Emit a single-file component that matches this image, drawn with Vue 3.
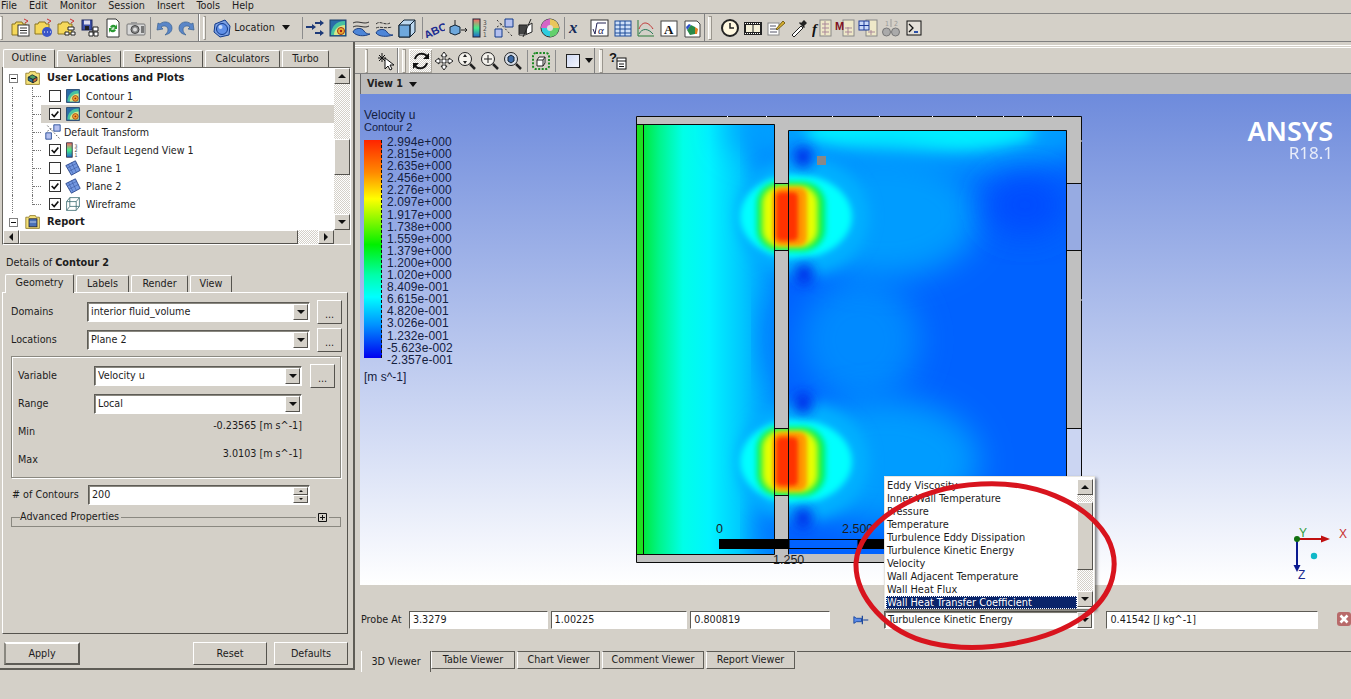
<script setup>
const icons = {
  folderDoc: '<path d="M1 6h3l1-2h6l1 2h3v11H1z" fill="#f5d85a" stroke="#8a7420"/><rect x="7" y="7" width="11" height="11" fill="#fff" stroke="#333"/><path d="M9 10h7M9 12.5h7M9 15h7" stroke="#333"/><path d="M13 1l4 2-3 2" fill="none" stroke="#c33"/>',
  folderBlue: '<path d="M1 6h3l1-2h6l1 2h3v10H1z" fill="#f5d85a" stroke="#8a7420"/><circle cx="13" cy="14" r="5" fill="#3a55c8"/><path d="M10 14h1M13 14h1M16 14h1" stroke="#fff"/><path d="M13 1l4 2-3 2" fill="none" stroke="#c33"/>',
  folderTree: '<path d="M1 6h3l1-2h6l1 2h3v10H1z" fill="#f5d85a" stroke="#8a7420"/><path d="M11 9h6v3h-6zM8 14h4v3H8zM14 14h4v3h-4z" fill="#fff" stroke="#222"/><path d="M13 1l4 2-3 2" fill="none" stroke="#c33"/>',
  saveTree: '<rect x="2" y="2" width="10" height="10" fill="#3c50a8" stroke="#1c2860"/><rect x="4" y="2.5" width="6" height="4" fill="#dde"/><rect x="5" y="8" width="4" height="4" fill="#222"/><path d="M9 14h4M13 10v6" stroke="#222"/><path d="M13 9h5v4h-5zM9 14h4v4H9zM14 14h4v4h-4z" fill="#fff" stroke="#222"/>',
  refresh: '<path d="M4 1h9l3 3v15H4z" fill="#fff" stroke="#333"/><path d="M7 9a3.5 3.5 0 0 1 6-1l1-2v5h-4l2-1a2 2 0 0 0-3 0z" fill="#2a9a32"/><path d="M13 12a3.5 3.5 0 0 1-6 1l-1 2v-5h4l-2 1a2 2 0 0 0 3 0z" fill="#2a9a32"/>',
  camera: '<rect x="1" y="6" width="18" height="11" rx="1" fill="#d8d8d8" stroke="#777"/><rect x="5" y="4" width="6" height="2" fill="#999"/><circle cx="9" cy="11.5" r="4" fill="#888" stroke="#444"/><circle cx="9" cy="11.5" r="2" fill="#ddd"/><rect x="15" y="8" width="3" height="7" fill="#777"/>',
  undo: '<path d="M4 5l-1 7 6-1-2-2c3-2 7-1 7 3 0 2-2 4-3 5 4-1 7-3 7-7 0-6-8-8-12-4z" fill="#5a86c8" stroke="#38608f" stroke-width=".7"/>',
  redo: '<path d="M16 5l1 7-6-1 2-2c-3-2-7-1-7 3 0 2 2 4 3 5-4-1-7-3-7-7 0-6 8-8 12-4z" fill="#5a86c8" stroke="#38608f" stroke-width=".7"/>',
  location: '<path d="M3 6l10-4 5 6-1 9-9 2-6-5z" fill="#7ba0e4" stroke="#123a8a"/><circle cx="10" cy="11" r="5.5" fill="#5f8fe8" stroke="#123a8a"/><circle cx="8.5" cy="9" r="2" fill="#c9dcfa"/>',
  vector: '<g fill="#1e3a78"><path d="M1 9h6V7l4 3-4 3v-2H1z" transform="translate(0 -1)"/><path d="M10 4h5V2l4 3-4 3V6h-5z"/><path d="M10 14h5v-2l4 3-4 3v-2h-5z"/></g>',
  contour: '<rect x="2" y="2" width="16" height="16" fill="#2b6ca8" stroke="#1b3e68"/><path d="M3 17c0-8 5-14 14-14v14z" fill="#47c3a0"/><path d="M6 17c0-6 5-10 11-10v10z" fill="#d8e888"/><circle cx="13" cy="13" r="3.5" fill="#f0b030" stroke="#a03018"/><circle cx="13" cy="13" r="1.2" fill="#a02018"/>',
  stream: '<path d="M2 5c5-3 11 2 16-1M2 9c5-3 11 2 16-1" fill="none" stroke="#333"/><path d="M2 14c1-4 9-5 11-1 2 3 5 3 6 3-6 3-14 2-17-2z" fill="#4e86d8" stroke="#1d3f80"/>',
  stream2: '<path d="M2 6c4-4 9 2 14-1M2 10c4-2 9 1 16-1" fill="none" stroke="#333" stroke-dasharray="3 1"/><path d="M2 15c1-4 9-5 11-1 2 3 5 3 6 3-6 2-14 2-17-2z" fill="#4e86d8" stroke="#1d3f80"/>',
  cube: '<path d="M2 7l5-5h11v12l-5 5H2z" fill="#bcd8f0" stroke="#123"/><path d="M2 7h11v12H2z" fill="#6ea8dc" stroke="#123"/><path d="M13 7l5-5M13 7v12" stroke="#123"/>',
  abc: '<text x="-2" y="17" font-size="11" font-weight="700" font-family="Liberation Sans" fill="#1c2c90" transform="rotate(-25 9 12)">ABC</text>',
  instance: '<path d="M2 9l5-2 5 2v6l-5 2-5-2z" fill="#6ea8dc" stroke="#123"/><path d="M7 2v5M13 12h6M17 10l2 2-2 2" stroke="#222" fill="none"/>',
  legend: '<defs><linearGradient id="lg" x2="0" y2="1"><stop offset="0" stop-color="#f66"/><stop offset=".5" stop-color="#4e8"/><stop offset="1" stop-color="#26c"/></linearGradient></defs><rect x="2" y="1" width="7" height="18" fill="url(#lg)" stroke="#223"/><text x="12" y="7" font-size="6.5" fill="#444">3</text><text x="12" y="13" font-size="6.5" fill="#444">2</text><text x="12" y="19" font-size="6.5" fill="#444">1</text>',
  transform: '<path d="M1 11h7v8H1z" fill="#b4c0ee" stroke="#123a8a"/><path d="M11 1h8v8h-8z" fill="#b4c0ee" stroke="#123a8a"/><path d="M3 2l15 16M8 6l-5 3" stroke="#333" stroke-dasharray="2 2"/>',
  clip: '<path d="M2 7h10l3-2v9l-7 3H2z" fill="#fff" stroke="#222"/><path d="M2 7h8v9H2z" fill="#222" opacity=".85"/><path d="M14 1L6 19" stroke="#222"/>',
  wheel: '<circle cx="10" cy="10" r="9" fill="#2ecde0" stroke="#333"/><path d="M10 10V1a9 9 0 0 1 9 9z" fill="#e9c65c"/><path d="M10 10h9a9 9 0 0 1-9 9z" fill="#63d06c"/><path d="M10 10V1a9 9 0 0 0-9 9z" fill="#d663c6"/><circle cx="10" cy="10" r="3" fill="#ddd"/>',
  xfn: '<text x="2" y="15" font-size="17" font-style="italic" font-weight="700" font-family="Liberation Serif" fill="#152a58">x</text>',
  sqrt: '<rect x="1" y="2" width="17" height="16" fill="#fff" stroke="#333"/><path d="M3 11l2 5 2-11h9" fill="none" stroke="#225"/><text x="8" y="16" font-size="11" font-style="italic" font-family="Liberation Serif" fill="#225">α</text>',
  table: '<rect x="2" y="3" width="16" height="15" fill="#cfe0f8" stroke="#1d4a98"/><path d="M2 7h16M2 11h16M2 15h16M7 3v15M12 3v15" stroke="#1d4a98"/>',
  chart: '<path d="M2 2v16h16" fill="none" stroke="#2a7a3a"/><path d="M3 11c3-8 9-8 14 0" fill="none" stroke="#c03030"/><path d="M3 16c3-6 9-6 14 0" fill="none" stroke="#2a7a5a"/>',
  textA: '<rect x="2" y="3" width="16" height="15" fill="#fff" stroke="#444"/><text x="5" y="15.5" font-size="13" font-family="Liberation Serif" font-weight="700" fill="#111">A</text>',
  multi: '<path d="M3 3h12l3 3v13H3z" fill="#fff" stroke="#444"/><path d="M5 12l4-5 4 2v7l-5 1z" fill="#2a8a48"/><path d="M5 12l4-5-2-1-3 3z" fill="#2c50c8"/><path d="M13 9l3 2-1 5h-2z" fill="#e08020"/>',
  clock: '<circle cx="10" cy="10" r="8" fill="#fff8e0" stroke="#222" stroke-width="2"/><path d="M10 5v5h4" fill="none" stroke="#222" stroke-width="1.5"/>',
  film: '<rect x="1" y="4" width="18" height="13" fill="#222"/><rect x="3" y="7" width="6.5" height="7" fill="#f4f0d8"/><rect x="10.5" y="7" width="6.5" height="7" fill="#f4f0d8"/><path d="M2 5.5h16M2 15.5h16" stroke="#fff" stroke-dasharray="1 1"/>',
  note: '<rect x="2" y="5" width="11" height="12" fill="#fff" stroke="#888"/><path d="M4 8h6M4 11h7M4 14h7" stroke="#556"/><path d="M10 11l7-8 2 2-8 7z" fill="#d8b030" stroke="#776018"/>',
  dropper: '<path d="M3 17l9-9 2 2-9 9z" fill="#fff" stroke="#222"/><path d="M12 5l3-3 3 3-3 3 1 1-1 1-5-5 1-1z" fill="#222"/>',
  ftable: '<rect x="8" y="2" width="11" height="16" fill="#eee8c8" stroke="#888"/><path d="M10 6h7M10 10h7M10 14h7M13 3v14" stroke="#a89"/><text x="0" y="16" font-size="15" font-style="italic" font-weight="700" font-family="Liberation Serif" fill="#111">f</text>',
  mtable: '<rect x="8" y="2" width="11" height="16" fill="#eee8c8" stroke="#888"/><path d="M10 10h7M10 14h7M13 9v8" stroke="#a89"/><text x="0" y="12" font-size="11" font-weight="700" font-family="Liberation Sans" fill="#801020">M</text>',
  gtable: '<rect x="8" y="2" width="11" height="16" fill="#eee8c8" stroke="#888"/><path d="M10 14h7M13 12v5" stroke="#a89"/><rect x="1" y="3" width="10" height="9" fill="#c8d8f8" stroke="#1c3a98"/><path d="M1 7.5h10M6 3v9" stroke="#1c3a98"/>',
  compare: '<text x="4" y="8" font-size="7" fill="#999">1</text><text x="13" y="8" font-size="7" fill="#999">2</text><path d="M10 1v8" stroke="#999"/><circle cx="5.5" cy="14" r="4" fill="#aaa" stroke="#777"/><circle cx="14.5" cy="14" r="4" fill="#aaa" stroke="#777"/>',
  terminal: '<rect x="3" y="3" width="14" height="14" fill="#e4e0d8" stroke="#111"/><path d="M5 6l4 4-4 4" fill="none" stroke="#111" stroke-width="1.3"/><path d="M10 14h4" stroke="#2c50a8" stroke-width="2"/>',
  pick: '<path d="M3 4l6 6M9 4l-6 6M6 2v9M2 7h8" stroke="#111"/><path d="M9 7v11l3-3 2 4 2-1-2-4h4z" fill="#fff" stroke="#111"/>',
  rotate: '<path d="M4 8a7 7 0 0 1 12-3" fill="none" stroke="#111" stroke-width="2"/><path d="M18 2v6h-6z" fill="#111"/><path d="M16 12a7 7 0 0 1-12 3" fill="none" stroke="#111" stroke-width="2"/><path d="M2 18v-6h6z" fill="#111"/>',
  pan: '<path d="M10 1l3 4h-2v4h4V7l4 3-4 3v-2h-4v4h2l-3 4-3-4h2v-4H5v2l-4-3 4-3v2h4V5H7z" fill="#fff" stroke="#111" stroke-width=".9"/>',
  zoomIo: '<circle cx="8" cy="8" r="6.5" fill="#f4f2ec" stroke="#222"/><path d="M8 3l2 3H6zM8 13l2-3H6z" fill="#222"/><path d="M13 13l5 5" stroke="#222" stroke-width="2.5"/>',
  zoomPlus: '<circle cx="8" cy="8" r="6.5" fill="#f4f2ec" stroke="#222"/><path d="M8 4v8M4 8h8" stroke="#222"/><path d="M13 13l5 5" stroke="#222" stroke-width="2.5"/>',
  zoomFit: '<circle cx="8" cy="8" r="6.5" fill="#d8dee8" stroke="#222"/><path d="M5 6l3-2 3 2v4l-3 2-3-2z" fill="#3c6aa8" stroke="#123"/><path d="M13 13l5 5" stroke="#222" stroke-width="2.5"/>',
  fit: '<rect x="2" y="2" width="16" height="16" rx="3" fill="none" stroke="#1c8a24" stroke-width="2" stroke-dasharray="2 1.5"/><path d="M6 9h6v6H6zM6 9l2-3h6v6l-2 3M12 9l2-3" fill="#fff" stroke="#222"/>',
  whatsThis: '<text x="1" y="11" font-size="13" font-weight="700" font-family="Liberation Sans" fill="#111">?</text><rect x="9" y="7" width="9" height="11" fill="#fff" stroke="#111"/><path d="M9 10h9M11 13h5M11 15.5h5" stroke="#111"/>',
  folderCube: '<path d="M1 4h4l1-2h7l1 2h4v14H1z" fill="#f5e27a" stroke="#8a7420"/><path d="M4 9l5-3 6 3-5 3z" fill="#50a060" stroke="#123"/><path d="M4 9l6 3v4l-6-3z" fill="#2c7a9a" stroke="#123"/><path d="M10 12l5-3v4l-5 3z" fill="#d06a30" stroke="#123"/>',
  folderDocs: '<path d="M1 4h4l1-2h7l1 2h4v14H1z" fill="#f5e27a" stroke="#8a7420"/><rect x="5" y="6" width="10" height="10" fill="#4c72b8" stroke="#223"/><path d="M6 10h8" stroke="#d8e4f8"/>',
  plane: '<path d="M1 7l12-6 6 12-11 6z" fill="#7498e0" stroke="#1d3a80"/><path d="M4 5l6 12M8 3l6 12M3 10l12-6M5 14l12-6" stroke="#2c4a94" stroke-width=".6"/>',
  wire: '<path d="M2 7h12v11H2zM6 2h12v11H6zM2 7l4-5M14 7l4-5M2 18l4-5M14 18l4-5" fill="none" stroke="#3a6a70"/>',
  pin: '<path d="M1 4v8l3-2h6V6H4z" fill="#5a8ae8" stroke="#12409a"/><path d="M11 3v10M12 8h6" stroke="#12409a" stroke-width="1.4"/>'
}

const mainBar = [
  ['#', 'folderDoc', 'folderBlue', 'folderTree', 'saveTree', 'refresh', 'camera', '|', 'undo', 'redo'],
  ['#', '@', '|', 'vector', 'contour', 'stream', 'stream2', 'cube', '|', 'abc', 'instance', 'legend', 'transform', 'clip', 'wheel', '|', 'xfn', 'sqrt', 'table', 'chart', 'textA', 'multi'],
  ['#', 'clock', 'film', 'note', 'dropper', 'ftable', 'mtable', 'gtable', 'compare', 'terminal']
]

const viewBar = [
  ['#', 'pick'],
  ['#', '!', 'pan', 'zoomIo', 'zoomPlus', 'zoomFit', '|', 'fit', '|', '$'],
  ['#', 'whatsThis']
]

const outlineTabs = ['Outline', 'Variables', 'Expressions', 'Calculators', 'Turbo']
const detailTabs = ['Geometry', 'Labels', 'Render', 'View']
const viewerTabs = ['3D Viewer', 'Table Viewer', 'Chart Viewer', 'Comment Viewer', 'Report Viewer']
const menus = ['File', 'Edit', 'Monitor', 'Session', 'Insert', 'Tools', 'Help']

const plots = [
  { label: 'Contour 1', icon: 'contour', box: true, on: false },
  { label: 'Contour 2', icon: 'contour', box: true, on: true, selected: true },
  { label: 'Default Transform', icon: 'transform', box: false },
  { label: 'Default Legend View 1', icon: 'legend', box: true, on: true },
  { label: 'Plane 1', icon: 'plane', box: true, on: false },
  { label: 'Plane 2', icon: 'plane', box: true, on: true },
  { label: 'Wireframe', icon: 'wire', box: true, on: true, last: true }
]

const legendValues = [
  '2.994e+000', '2.815e+000', '2.635e+000', '2.456e+000', '2.276e+000', '2.097e+000', '1.917e+000',
  '1.738e+000', '1.559e+000', '1.379e+000', '1.200e+000', '1.020e+000', '8.409e-001', '6.615e-001',
  '4.820e-001', '3.026e-001', '1.232e-001', '-5.623e-002', '-2.357e-001'
]

const probeVars = [
  'Eddy Viscosity', 'Inner Wall Temperature', 'Pressure', 'Temperature', 'Turbulence Eddy Dissipation',
  'Turbulence Kinetic Energy', 'Velocity', 'Wall Adjacent Temperature', 'Wall Heat Flux',
  'Wall Heat Transfer Coefficient'
]
</script>

<template>
  <div class="app">
    <div class="menubar">
      <span v-for="m in menus" :key="m" class="menu">{{ m }}</span>
    </div>

    <div class="toolbar">
      <div v-for="(group, i) in mainBar" :key="i" class="tgroup" :class="'g' + i">
        <template v-for="(item, j) in group" :key="j">
          <span v-if="item === '#'" class="grip"></span>
          <span v-else-if="item === '|'" class="sep"></span>
          <span v-else-if="item === '@'" class="loc">
            <svg class="ic" viewBox="0 0 20 20" v-html="icons.location"></svg>
            <span>Location</span>
            <span class="caret"></span>
          </span>
          <span v-else class="tool"><svg class="ic" viewBox="0 0 20 20" v-html="icons[item]"></svg></span>
        </template>
      </div>
    </div>

    <div class="main">
      <aside class="left">
        <div class="tabs outline-tabs">
          <span v-for="(t, i) in outlineTabs" :key="t" class="tab" :class="['ot' + i, { active: i === 0 }]">{{ t }}</span>
        </div>

        <div class="treebox">
          <div class="tree">
            <div class="node root">
              <span class="expander"></span>
              <svg class="ic16" viewBox="0 0 20 20" v-html="icons.folderCube"></svg>
              <b>User Locations and Plots</b>
            </div>
            <div v-for="p in plots" :key="p.label" class="node">
              <span class="stem-a"></span>
              <span class="stem-b" :class="{ last: p.last }"></span>
              <div class="node-main" :class="{ selected: p.selected, nobox: !p.box }">
                <span v-if="p.box" class="check" :class="{ on: p.on }">
                  <svg v-if="p.on" viewBox="0 0 12 12"><path d="M2 6l3 3 5-6" fill="none" stroke="#111" stroke-width="2"/></svg>
                </span>
                <svg class="ic16" viewBox="0 0 20 20" v-html="icons[p.icon]"></svg>
                <span>{{ p.label }}</span>
              </div>
            </div>
            <div class="node root">
              <span class="expander"></span>
              <svg class="ic16" viewBox="0 0 20 20" v-html="icons.folderDocs"></svg>
              <b>Report</b>
            </div>
          </div>
          <div class="vscroll">
            <span class="sb-btn"><i class="tri up"></i></span>
            <span class="track t1"></span>
            <span class="thumb"></span>
            <span class="track t2"></span>
            <span class="sb-btn"><i class="tri down"></i></span>
          </div>
          <div class="hscroll">
            <span class="sb-btn"><i class="tri lft"></i></span>
            <span class="thumb h"></span>
            <span class="track t2"></span>
            <span class="sb-btn"><i class="tri rgt"></i></span>
          </div>
          <div class="corner"></div>
        </div>

        <div class="details-title">Details of <b>Contour 2</b></div>
        <div class="tabs detail-tabs">
          <span v-for="(t, i) in detailTabs" :key="t" class="tab" :class="['dt' + i, { active: i === 0 }]">{{ t }}</span>
        </div>

        <div class="form">
          <div class="frow">
            <label>Domains</label>
            <div class="combo"><span>interior fluid_volume</span><span class="drop"><i class="tri down"></i></span></div>
            <button class="dots">...</button>
          </div>
          <div class="frow">
            <label>Locations</label>
            <div class="combo"><span>Plane 2</span><span class="drop"><i class="tri down"></i></span></div>
            <button class="dots">...</button>
          </div>

          <div class="group">
            <div class="grow">
              <label>Variable</label>
              <div class="combo"><span>Velocity u</span><span class="drop"><i class="tri down"></i></span></div>
              <button class="dots">...</button>
            </div>
            <div class="grow">
              <label>Range</label>
              <div class="combo"><span>Local</span><span class="drop"><i class="tri down"></i></span></div>
            </div>
            <div class="grow">
              <label>Min</label>
              <span class="val">-0.23565 [m s^-1]</span>
            </div>
            <div class="grow">
              <label>Max</label>
              <span class="val">3.0103 [m s^-1]</span>
            </div>
          </div>

          <div class="frow contours">
            <label># of Contours</label>
            <div class="combo"><span>200</span><span class="spin"><i class="sb-btn"><i class="tri up small"></i></i><i class="sb-btn"><i class="tri down small"></i></i></span></div>
          </div>

          <div class="adv">
            <span class="adv-label">Advanced Properties</span>
            <span class="adv-plus">
              <svg viewBox="0 0 9 9"><path d="M.5.5h8v8h-8zM4.5 2v5M2 4.5h5" fill="none" stroke="#111"/></svg>
            </span>
          </div>
        </div>

        <div class="actions">
          <button class="btn default">Apply</button>
          <button class="btn reset">Reset</button>
          <button class="btn">Defaults</button>
        </div>
      </aside>

      <section class="viewer">
        <div class="viewbar">
          <div v-for="(group, i) in viewBar" :key="i" class="tgroup" :class="'v' + i">
            <template v-for="(item, j) in group" :key="j">
              <span v-if="item === '#'" class="grip"></span>
              <span v-else-if="item === '|'" class="sep"></span>
              <span v-else-if="item === '!'" class="tool pressed"><svg class="ic" viewBox="0 0 20 20" v-html="icons.rotate"></svg></span>
              <span v-else-if="item === '$'" class="swatch-btn"><span class="swatch"></span><span class="caret"></span></span>
              <span v-else class="tool"><svg class="ic" viewBox="0 0 20 20" v-html="icons[item]"></svg></span>
            </template>
          </div>
        </div>

        <div class="viewtitle"><b>View 1</b><span class="caret"></span></div>

        <div class="canvas">
          <svg class="plot" viewBox="360 94 991 491">
            <defs>
              <linearGradient id="leftBase" gradientUnits="userSpaceOnUse" x1="644" y1="0" x2="774" y2="0">
                <stop offset="0" stop-color="#00ea40" />
                <stop offset=".12" stop-color="#00f58c" />
                <stop offset=".3" stop-color="#00ffe8" />
                <stop offset=".5" stop-color="#00f4ff" />
                <stop offset=".75" stop-color="#00c8ff" />
                <stop offset="1" stop-color="#0090ff" />
              </linearGradient>
              <filter id="b2" x="-30%" y="-30%" width="160%" height="160%"><feGaussianBlur stdDeviation="2" /></filter>
              <filter id="b3" x="-30%" y="-30%" width="160%" height="160%"><feGaussianBlur stdDeviation="3" /></filter>
              <filter id="b6" x="-80%" y="-80%" width="260%" height="260%"><feGaussianBlur stdDeviation="6" /></filter>
              <filter id="b7" x="-40%" y="-60%" width="180%" height="220%"><feGaussianBlur stdDeviation="7" /></filter>
              <filter id="b16" x="-50%" y="-50%" width="200%" height="200%"><feGaussianBlur stdDeviation="16" /></filter>
              <clipPath id="fluid">
                <path d="M644 124.5h131v430H644zM775 183h14v67h-14zM775 428h14v67h-14zM789 130h278v424H789z" />
              </clipPath>
              <g id="jet">
                <ellipse cx="803" cy="216.5" rx="66" ry="60" fill="#00b0ff" filter="url(#b7)" />
                <ellipse cx="796" cy="216.5" rx="56" ry="42" fill="#00ffff" filter="url(#b3)" />
                <rect x="757" y="182" width="68" height="69" rx="22" fill="#00f050" filter="url(#b3)" />
                <rect x="762" y="186" width="56" height="61" rx="17" fill="#e8ff00" filter="url(#b3)" />
                <rect x="773" y="187" width="34" height="59" rx="8" fill="#ff9a00" filter="url(#b2)" />
                <rect x="776" y="192" width="22" height="49" rx="5" fill="#ff3000" filter="url(#b2)" />
              </g>
            </defs>

            <rect x="636" y="116" width="445" height="446" fill="#c0c0c0" />
            <path d="M1067 183h14.5v67H1067z" fill="#97abe2" />
            <path d="M1067 428h14.5v130H1067z" fill="#cbd5f2" />

            <g clip-path="url(#fluid)">
              <rect x="644" y="124" width="131" height="431" fill="url(#leftBase)" />
              <ellipse cx="772" cy="145" rx="16" ry="36" fill="#0070ff" filter="url(#b16)" />
              <ellipse cx="775" cy="338" rx="12" ry="44" fill="#0078ff" filter="url(#b16)" />
              <ellipse cx="772" cy="532" rx="16" ry="34" fill="#0070ff" filter="url(#b16)" />
              <rect x="789" y="130" width="278" height="424" fill="#0062ff" />
              <ellipse cx="915" cy="130" rx="190" ry="44" fill="#00a0ff" filter="url(#b16)" />
              <ellipse cx="920" cy="132" rx="115" ry="20" fill="#00eeff" filter="url(#b7)" />
              <ellipse cx="860" cy="340" rx="60" ry="60" fill="#008aff" filter="url(#b16)" />
              <ellipse cx="885" cy="216" rx="95" ry="62" fill="#009cff" filter="url(#b16)" />
              <ellipse cx="885" cy="461" rx="95" ry="62" fill="#009cff" filter="url(#b16)" />
              <ellipse cx="1025" cy="205" rx="40" ry="30" fill="#004cff" filter="url(#b16)" />
              <use href="#jet" />
              <use href="#jet" y="245" />
              <ellipse cx="803" cy="157" rx="10" ry="11" fill="#0024e8" opacity=".85" filter="url(#b6)" />
              <ellipse cx="804" cy="274" rx="10" ry="11" fill="#0024e8" opacity=".85" filter="url(#b6)" />
              <ellipse cx="803" cy="403" rx="10" ry="11" fill="#0024e8" opacity=".85" filter="url(#b6)" />
              <ellipse cx="803" cy="518" rx="10" ry="11" fill="#0024e8" opacity=".85" filter="url(#b6)" />
            </g>

            <rect x="636.5" y="124.5" width="7" height="430" fill="#1fe020" />
            <rect x="817" y="156" width="9" height="9" fill="#888" />

            <g fill="none" stroke="#0a0a0a" stroke-width="1">
              <path d="M636.5 116.5h445v446h-445z" />
              <path d="M636.5 124.5h138V554.5h-138M643.5 124.5V554.5" />
              <path d="M788.5 554.5V130.5h278v424" />
              <path d="M774.5 183.5h14M774.5 250.5h14M774.5 428.5h14M774.5 495.5h14" />
              <path d="M1066.5 183.5h15M1066.5 250.5h15M1066.5 428.5h15" />
            </g>
            <path d="M727 116.5h1M766 116.5h1M832 116.5h1M879 116.5h1M932 116.5h1M976 116.5h1M1003 116.5h1M1022 116.5h1M1052 116.5h1M1081 141h1M1081 300h1" stroke="#fff" />

            <rect x="719" y="539" width="70" height="10" fill="#000" />
            <rect x="789" y="539.5" width="69" height="9" fill="none" stroke="#000" />
            <rect x="858" y="539" width="30" height="10" fill="#000" />
            <g font-family="Liberation Sans" font-size="12.5" fill="#1c1c1c">
              <text x="716" y="533">0</text>
              <text x="842" y="533">2.500</text>
              <text x="773" y="564">1.250</text>
            </g>

            <path d="M1297 539h26" stroke="#c01010" stroke-width="2" />
            <path d="M1321 535.5l9 3.5-9 3.5z" fill="#c01010" />
            <path d="M1297 539v27" stroke="#0a1a90" stroke-width="2" />
            <path d="M1293.5 565l3.5 7 3.5-7z" fill="#0a1a90" />
            <circle cx="1297" cy="539" r="3" fill="#107010" />
            <circle cx="1314" cy="556" r="3.2" fill="#10b8c8" />
            <g font-family="Liberation Sans" font-size="12">
              <text x="1299" y="537" fill="#30a040">Y</text>
              <text x="1339" y="538" fill="#c83030">X</text>
              <text x="1298" y="579" fill="#1a2a90">Z</text>
            </g>
          </svg>

          <div class="legend">
            <div class="leg-title">Velocity u</div>
            <div class="leg-sub">Contour 2</div>
            <div class="leg-body">
              <div class="leg-bar"></div>
              <div class="leg-values">
                <span v-for="v in legendValues" :key="v">{{ v }}</span>
              </div>
            </div>
            <div class="leg-unit">[m s^-1]</div>
          </div>

          <div class="brand">
            <div class="brand-name">ANSYS</div>
            <div class="brand-rel">R18.1</div>
          </div>
        </div>

        <div class="probe">
          <label>Probe At</label>
          <div class="field f1">3.3279</div>
          <div class="field f2">1.00225</div>
          <div class="field f3">0.800819</div>
          <svg class="pin" viewBox="0 0 20 16" v-html="icons.pin"></svg>
          <div class="probe-combo">
            <div class="combo wide"><span>Turbulence Kinetic Energy</span><span class="drop"><i class="tri down"></i></span></div>
            <div class="popup">
              <ul>
                <li v-for="(v, i) in probeVars" :key="v" :class="{ sel: i === probeVars.length - 1 }">{{ v }}</li>
              </ul>
              <div class="vscroll pop">
                <span class="sb-btn"><i class="tri up"></i></span>
                <span class="track p1"></span>
                <span class="thumb p"></span>
                <span class="track t2"></span>
                <span class="sb-btn"><i class="tri down"></i></span>
              </div>
            </div>
          </div>
          <div class="field result">0.41542 [J kg^-1]</div>
          <span class="close">
            <svg viewBox="0 0 14 14"><rect width="14" height="14" rx="3" fill="#b86a6a"/><path d="M3.5 3.5l7 7M10.5 3.5l-7 7" stroke="#fff" stroke-width="2.6"/></svg>
          </span>
        </div>

        <div class="vtabs">
          <span v-for="(t, i) in viewerTabs" :key="t" class="vtab" :class="['vt' + i, { active: i === 0 }]">{{ t }}</span>
          <span class="vfill"></span>
        </div>
      </section>
    </div>

    <svg class="ring" viewBox="0 0 270 176">
      <path d="M128 5C180 2 232 22 254 58c14 26 8 58-24 80-34 24-100 38-152 26C34 154 2 118 3 84 5 46 60 8 128 5z" fill="none" stroke="#d8141e" stroke-width="5" />
    </svg>
  </div>
</template>

<style>
html, body {
  margin: 0;
  background: #d4d0c8;
  overflow: hidden;
}
</style>

<style scoped>
.app {
  position: relative;
  width: 1351px;
  height: 699px;
  overflow: hidden;
  display: flex;
  flex-direction: column;
  background: #d4d0c8;
  color: #1c1c1c;
  font: 10.7px/14px "DejaVu Sans Condensed", "DejaVu Sans", "Liberation Sans", sans-serif;
  font-stretch: condensed;
}

.menubar {
  height: 13px;
  display: flex;
  font-size: 10.7px;
  line-height: 11px;
}

.menu {
  margin-left: 1px;
  margin-right: 11px;
}

.toolbar {
  height: 27px;
  display: flex;
  border-top: 1px solid #808080;
  border-bottom: 1px solid #808080;
}

.tgroup {
  display: flex;
  align-items: center;
  height: 100%;
  border-right: 1px solid #808080;
  box-sizing: border-box;
}

.g0 { width: 199px; }
.g1 { width: 506px; border-left: 1px solid #fff; }
.g2 { border: 0; }

.grip {
  width: 2px;
  height: 22px;
  margin: 0 4px 0 3px;
  border: 1px solid #9a968e;
  border-left-color: #fff;
  background: #ece9e2;
}

.g0 .grip { margin: 0 6px 0 0; }
.g2 .grip { margin: 0 6px 0 3px; }

.sep {
  width: 1px;
  height: 22px;
  background: #8c8c8c;
  margin: 0 1px 0 3px;
}

.tool {
  width: 23px;
  height: 24px;
  flex: none;
  display: flex;
  align-items: center;
  justify-content: center;
}

.ic {
  width: 20px;
  height: 20px;
}

.ic16 {
  width: 16px;
  height: 16px;
  flex: none;
}

.loc {
  width: 87px;
  flex: none;
  display: flex;
  align-items: center;
  gap: 2px;
  font-size: 10.7px;
  margin-left: 2px;
}

.caret {
  width: 0;
  height: 0;
  margin-left: 5px;
  border: 4px solid transparent;
  border-top: 5px solid #111;
  border-bottom: 0;
}

.main {
  flex: 1;
  display: flex;
  min-height: 0;
}

.left {
  width: 353px;
  height: 626px;
  box-sizing: content-box;
  border-right: 2px solid #5e5c56;
  border-bottom: 2px solid #5e5c56;
  display: flex;
  flex-direction: column;
}

.tabs {
  display: flex;
  align-items: flex-end;
}

.outline-tabs {
  height: 20px;
  margin: 5px 0 0 3px;
}

.tab {
  box-sizing: border-box;
  height: 17px;
  flex: none;
  text-align: center;
  font-size: 10.7px;
  line-height: 16px;
  border: 1px solid #fff;
  border-right: 1px solid #55534e;
  border-bottom: 0;
  border-radius: 2px 2px 0 0;
  margin-right: 2px;
}

.tab.active {
  height: 19px;
  line-height: 16px;
  margin-bottom: -1px;
  background: #d4d0c8;
  position: relative;
}

.ot0 { width: 52px; }
.ot1 { width: 64px; }
.ot2 { width: 80px; }
.ot3 { width: 75px; }
.ot4 { width: 47px; }

.dt0 { width: 69px; }
.dt1 { width: 53px; }
.dt2 { width: 57px; }
.dt3 { width: 42px; }

.treebox {
  width: 349px;
  height: 178px;
  margin: 0 0 0 2px;
  box-sizing: border-box;
  border: 1px solid #6a6862;
  border-right-color: #fff;
  border-bottom-color: #fff;
  display: grid;
  grid-template-columns: 1fr 16px;
  grid-template-rows: 1fr 14px;
  background: #d4d0c8;
}

.tree {
  background: #fff;
  padding-top: 1px;
  overflow: hidden;
  font-size: 10.6px;
}

.node {
  height: 18px;
  display: flex;
  align-items: center;
}

.root {
  padding-left: 6px;
}

.root b {
  font-size: 10.95px;
  margin-left: 6px;
}

.root .ic16 {
  margin-left: 7px;
}

.expander {
  width: 7px;
  height: 7px;
  border: 1px solid #808080;
  background: linear-gradient(#111, #111) center/5px 1px no-repeat #fff;
  flex: none;
}

.stem-a {
  align-self: stretch;
  width: 20px;
  margin-left: 9px;
  box-sizing: border-box;
  border-left: 1px dotted #777;
  flex: none;
}

.stem-b {
  align-self: stretch;
  width: 9px;
  box-sizing: border-box;
  border-left: 1px dotted #777;
  position: relative;
  flex: none;
}

.stem-b::after {
  content: "";
  position: absolute;
  left: 0;
  right: 0;
  top: 9px;
  border-top: 1px dotted #777;
}

.stem-b.last {
  align-self: flex-start;
  height: 10px;
}

.node-main {
  flex: 1;
  align-self: stretch;
  display: flex;
  align-items: center;
  padding-left: 8px;
  gap: 4px;
  min-width: 0;
}

.node-main > span:last-child {
  margin-left: 1px;
}

.node-main.selected {
  background: #d4d0c8;
}

.node-main.nobox {
  padding-left: 4px;
  gap: 2px;
}

.check {
  width: 10px;
  height: 10px;
  border: 1px solid #333;
  background: #fff;
  flex: none;
  display: flex;
}

.check svg {
  width: 10px;
  height: 10px;
}

.vscroll {
  display: flex;
  flex-direction: column;
  width: 16px;
}

.hscroll {
  display: flex;
  height: 14px;
}

.corner {
  background: #d4d0c8;
}

.sb-btn {
  box-sizing: border-box;
  width: 16px;
  height: 16px;
  flex: none;
  background: #d4d0c8;
  border: 1px solid;
  border-color: #fff #55534e #55534e #fff;
  display: flex;
  align-items: center;
  justify-content: center;
}

.hscroll .sb-btn {
  height: 14px;
}

.track {
  background: repeating-conic-gradient(#d4d0c8 0 25%, #fff 0 50%) 0 0/2px 2px;
}

.t1 { height: 55px; flex: none; }
.t2 { flex: 1; }
.p1 { height: 7px; flex: none; }

.thumb {
  box-sizing: border-box;
  height: 36px;
  flex: none;
  background: #d4d0c8;
  border: 1px solid;
  border-color: #fff #55534e #55534e #fff;
}

.thumb.h {
  width: 279px;
  height: 14px;
}

.thumb.p {
  height: 68px;
}

.tri {
  width: 0;
  height: 0;
  border: 4px solid transparent;
  display: block;
}

.tri.up { border-top: 0; border-bottom: 4px solid #111; }
.tri.down { border-bottom: 0; border-top: 4px solid #111; }
.tri.lft { border-left: 0; border-right: 4px solid #111; }
.tri.rgt { border-right: 0; border-left: 4px solid #111; }
.tri.small { border-width: 2.5px; border-top-width: 0; }
.tri.down.small { border-width: 2.5px; border-bottom-width: 0; border-top-color: #111; }

.details-title {
  margin: 11px 0 0 6px;
  height: 14px;
  font-size: 10.8px;
}

.detail-tabs {
  margin: 4px 0 0 5px;
  height: 18px;
}

.form {
  box-sizing: border-box;
  width: 346px;
  height: 342px;
  margin-left: 2px;
  padding: 7px 6px 0 8px;
  border: 1px solid #fff;
  border-right: 1px solid #55534e;
  border-bottom: 1px solid #55534e;
}

.frow {
  display: grid;
  grid-template-columns: 76px 223px 32px;
  align-items: center;
  height: 24px;
  margin-bottom: 4px;
}

.frow .dots {
  margin-left: 7px;
}

.grow {
  display: grid;
  grid-template-columns: 76px 208px 33px;
  align-items: center;
  height: 25px;
  margin-bottom: 3px;
}

.grow .dots {
  margin-left: 8px;
}

label {
  font-size: 10.7px;
}

.combo {
  box-sizing: border-box;
  height: 20px;
  background: #fff;
  border: 1px solid;
  border-color: #5e5c56 #fff #fff #5e5c56;
  box-shadow: inset 1px 1px 0 #8a8880;
  display: flex;
  align-items: center;
  justify-content: space-between;
  padding-left: 3px;
  font-size: 10.7px;
}

.drop {
  width: 15px;
  height: 16px;
  margin-right: 1px;
  box-sizing: border-box;
  background: #d4d0c8;
  border: 1px solid;
  border-color: #fff #55534e #55534e #fff;
  display: flex;
  align-items: center;
  justify-content: center;
}

.spin {
  display: flex;
  flex-direction: column;
  margin-right: 1px;
}

.spin .sb-btn {
  width: 15px;
  height: 8px;
}

.dots {
  box-sizing: border-box;
  width: 25px;
  height: 24px;
  padding: 6px 0 0;
  font: inherit;
  color: #1c1c1c;
  background: #d4d0c8;
  border: 1px solid;
  border-color: #fff #55534e #55534e #fff;
}

.group {
  width: 330px;
  height: 122px;
  box-sizing: border-box;
  margin-top: 4px;
  padding: 6px 0 0 6px;
  border: 1px solid #8a8880;
  box-shadow: inset 1px 1px 0 #fff, 1px 1px 0 #fff;
}

.grow:nth-child(n + 3) .val {
  align-self: start;
  text-align: right;
  line-height: 14px;
  font-size: 10.7px;
}

.contours {
  margin: 7px 0 0;
  height: 19px;
  grid-template-columns: 77px 222px;
}

.contours label {
  margin-left: 1px;
}

.adv {
  position: relative;
  box-sizing: border-box;
  width: 330px;
  height: 10px;
  margin-top: 13px;
  border: 1px solid #8a8880;
  display: flex;
  justify-content: space-between;
  padding: 0 11px 0 8px;
}

.adv-label {
  height: 14px;
  margin-top: -8px;
  padding: 0 2px 0 0;
  background: #d4d0c8;
  font-size: 10.7px;
}

.adv-plus {
  width: 9px;
  height: 9px;
  margin-top: -5px;
  padding: 0 2px;
  background: #d4d0c8;
}

.adv-plus svg {
  display: block;
  width: 9px;
  height: 9px;
}

.actions {
  display: flex;
  margin: 8px 0 0 4px;
}

.btn {
  box-sizing: border-box;
  width: 74px;
  height: 23px;
  padding: 0;
  margin-left: 7px;
  font: inherit;
  font-size: 10.7px;
  color: #1c1c1c;
  background: #d4d0c8;
  border: 1px solid;
  border-color: #fff #55534e #55534e #fff;
}

.btn.default {
  width: 76px;
  margin-left: 0;
  border: 2px solid;
  border-color: #5e5c56;
  border-top-color: #fff;
  border-left-color: #8a8880;
}

.btn.reset {
  margin-left: 113px;
}

.viewer {
  flex: 1;
  min-width: 0;
  margin-left: 5px;
  display: flex;
  flex-direction: column;
}

.viewbar {
  box-sizing: content-box;
  height: 25px;
  margin: 3px 0 0 -5px;
  padding-left: 5px;
  border-top: 3px double #fff;
  border-bottom: 1px solid #808080;
  display: flex;
}

.v0 { width: 38px; }
.v1 { width: 197px; border-left: 1px solid #fff; }
.v2 { border: 0; }

.v0 .grip { margin-left: 5px; margin-right: 6px; }
.v1 .grip { margin: 0 3px 0 3px; }
.v2 .grip { margin: 0 3px 0 4px; }

.pressed {
  background: repeating-conic-gradient(#d4d0c8 0 25%, #fff 0 50%) 0 0/2px 2px;
  box-shadow: inset 1px 1px 0 #fff, inset -1px -1px 0 #a8a49c;
}

.swatch-btn {
  display: flex;
  align-items: center;
  margin-left: 9px;
}

.swatch {
  box-sizing: border-box;
  width: 14px;
  height: 14px;
  border: 1px solid #222;
  background: linear-gradient(135deg, #cfd9f4, #f4f6fc);
}

.viewtitle {
  height: 20px;
  background: #bcbcbc;
  border-left: 1px solid #6a6a6a;
  display: flex;
  align-items: center;
  padding-left: 6px;
  font-size: 10.7px;
  color: #222;
}

.viewtitle .caret {
  margin-left: 6px;
}

.canvas {
  position: relative;
  height: 491px;
  flex: none;
  overflow: hidden;
  background: linear-gradient(#6e8bdc, #ffffff);
}

.plot {
  position: absolute;
  inset: 0;
  width: 991px;
  height: 491px;
}

.legend {
  position: absolute;
  left: 4px;
  top: 15px;
  font: 12px/12px "Liberation Sans", sans-serif;
  color: #14203e;
}

.leg-sub {
  font-size: 11px;
}

.leg-body {
  display: flex;
  margin-top: 7px;
}

.leg-bar {
  width: 17px;
  height: 218px;
  background: linear-gradient(#ff2400 0%, #ff8a00 15%, #ffff00 27%, #00f000 48%, #00ffaa 62%, #00ffff 72%, #0090ff 85%, #0000f0 100%);
  border-right: 1px dashed #111;
}

.leg-values {
  display: flex;
  flex-direction: column;
  margin: -4px 0 0 5px;
  line-height: 12.1px;
  white-space: nowrap;
  letter-spacing: .1px;
}

.leg-unit {
  margin-top: 5px;
}

.brand {
  position: absolute;
  right: 18px;
  top: 24px;
  text-align: right;
  color: #fff;
  font-family: "Noto Sans", sans-serif;
}

.brand-name {
  font-size: 27px;
  line-height: 26px;
  font-weight: 600;
}

.brand-rel {
  margin-top: 2px;
  font-size: 17px;
  line-height: 14px;
  opacity: .82;
}

.probe {
  position: relative;
  height: 66px;
  flex: none;
  display: flex;
  align-items: flex-start;
  padding: 26px 0 0 1px;
  box-sizing: border-box;
}

.probe label {
  width: 48px;
  line-height: 18px;
}

.field {
  box-sizing: border-box;
  height: 18px;
  background: #fff;
  border: 1px solid;
  border-color: #5e5c56 #fff #fff #5e5c56;
  padding-left: 3px;
  line-height: 16px;
  font-size: 10.7px;
  margin-right: 3px;
}

.f1 { width: 139px; }
.f2 { width: 137px; }
.f3 { width: 140px; }

.pin {
  width: 17px;
  height: 14px;
  margin: 2px 14px 0 20px;
}

.probe-combo {
  position: relative;
  width: 211px;
}

.wide {
  height: 18px;
}

.popup {
  position: absolute;
  left: 0;
  bottom: 20px;
  width: 211px;
  height: 133px;
  box-sizing: border-box;
  background: #fff;
  border: 1px solid #e8e6e0;
  box-shadow: 2px 2px 3px rgba(0, 0, 0, .5);
  display: flex;
  padding: 2px 1px 1px 1px;
  z-index: 2;
}

.popup ul {
  flex: 1;
  margin: 0;
  padding: 0;
  list-style: none;
  font-size: 10.9px;
}

.popup li {
  height: 13px;
  line-height: 13px;
  padding-left: 1px;
  white-space: nowrap;
}

.popup li.sel {
  background: #0a246a;
  color: #fff;
  outline: 1px dotted #fff;
  outline-offset: -1px;
}

.result {
  width: 212px;
  margin: 0 0 0 12px;
}

.close {
  width: 14px;
  height: 14px;
  margin: 1px 0 0 19px;
  flex: none;
}

.close svg {
  display: block;
  width: 14px;
  height: 14px;
}

.vtabs {
  display: flex;
  align-items: flex-start;
  height: 21px;
  padding-left: 1px;
}

.vtab {
  box-sizing: border-box;
  flex: none;
  height: 18px;
  text-align: center;
  font-size: 10.7px;
  line-height: 16px;
  background: #d4d0c8;
  border: 1px solid #fff;
  border-top: 1px solid #5e5c56;
  border-right-color: #5e5c56;
  border-bottom-color: #5e5c56;
  margin-right: 2px;
}

.vtab.active {
  height: 21px;
  padding-top: 3px;
  border-top: 0;
  border-bottom: 0;
  border-right-color: #5e5c56;
  margin-right: 0;
}

.vt0 { width: 70px; }
.vt1 { width: 84px; }
.vt2 { width: 83px; }
.vt3 { width: 102px; }
.vt4 { width: 89px; }

.vfill {
  flex: 1;
  border-top: 1px solid #5e5c56;
}

.ring {
  position: absolute;
  left: 853px;
  top: 479px;
  width: 270px;
  height: 176px;
  pointer-events: none;
  z-index: 5;
}
</style>
